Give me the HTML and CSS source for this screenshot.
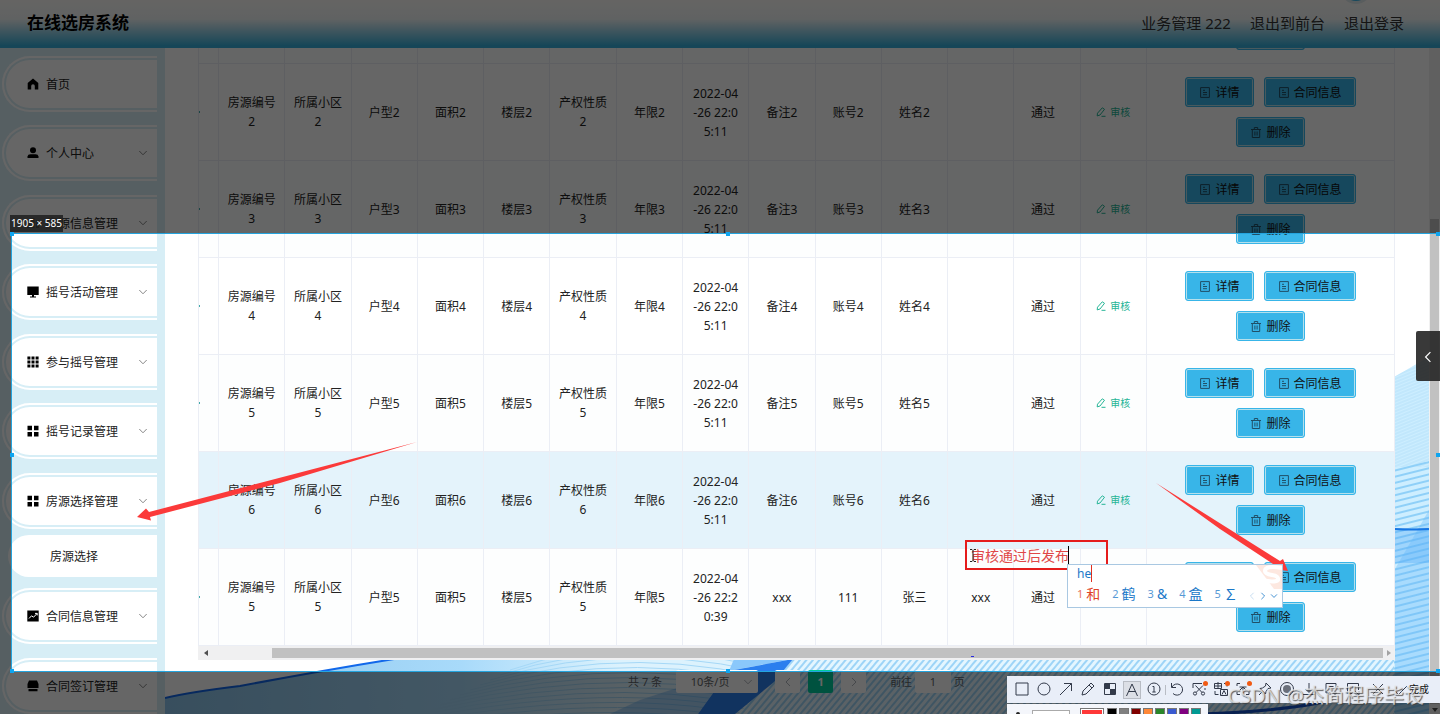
FILE: index.html
```html
<!DOCTYPE html>
<html lang="zh-CN">

<head>
    <meta charset="UTF-8">
    <meta name="viewport" content="width=device-width, initial-scale=1.0">
    <title>在线选房系统</title>
    <link rel="stylesheet" href="styles.css">
</head>

<body>
    <!-- 图标 -->
    <svg class="symbols" aria-hidden="true">
        <symbol id="i-home" viewBox="0 0 12 12"><path d="M6 .5 11.3 5v6.5H7.8V8a1.8 1.8 0 0 0-3.6 0v3.5H.7V5z" /></symbol>
        <symbol id="i-user" viewBox="0 0 12 12"><circle cx="6" cy="3.2" r="3" /><path d="M.5 11V9.500Q.800 7.200 3.500 7.200H8.500Q11.200 7.200 11.500 9.500V11z" /></symbol>
        <symbol id="i-bars" viewBox="0 0 12 12"><path d="M0 5h3v6H0zM4.500 1h3v10h-3zM9 3h3v8H9z" /></symbol>
        <symbol id="i-screen" viewBox="0 0 12 12"><path d="M.3.500h11.400v8.500H.3zM5 9h2v1.500h2v1H3v-1h2z" /></symbol>
        <symbol id="i-grid9" viewBox="0 0 12 12"><path d="M.4.400h3v3h-3zM4.500.400h3v3h-3zM8.600.400h3v3h-3zM.4 4.500h3v3h-3zM4.500 4.500h3v3h-3zM8.600 4.500h3v3h-3zM.4 8.600h3v3h-3zM4.500 8.600h3v3h-3zM8.600 8.600h3v3h-3z" /></symbol>
        <symbol id="i-grid4" viewBox="0 0 12 12"><path d="M.5.800h4.500v4.400H.500zM7 .8h4.500v4.400H7zM.5 7h4.500v4.400H.500zM7 7h4.500v4.400H7z" /></symbol>
        <symbol id="i-chart" viewBox="0 0 12 12"><path d="M.3.500h11.400v11H.3z" /><path d="m2 8.500 2.500-2.700 2 1.400L10 3.600M8 3.400h2.200v2" fill="none" stroke="#fff" /></symbol>
        <symbol id="i-print" viewBox="0 0 12 12"><path d="M2 .5h8L11.500 4v4H.5V4zM1.500 9h9v2.300h-9z" /></symbol>
        <symbol id="i-down" viewBox="0 0 10 10"><path d="m1.300 3 3.700 3.800L8.700 3" fill="none" stroke="currentColor" /></symbol>
        <symbol id="i-left" viewBox="0 0 10 10"><path d="M7 1 3 5l4 4" fill="none" stroke="currentColor" /></symbol>
        <symbol id="i-right" viewBox="0 0 10 10"><path d="m3 1 4 4-4 4" fill="none" stroke="currentColor" /></symbol>
        <symbol id="i-doc" viewBox="0 0 10 11"><path d="M.6.600h8.800v9.800H.600zM3 3.300h2M3 5.500h4M3 7.700h4" fill="none" stroke="currentColor" /></symbol>
        <symbol id="i-trash" viewBox="0 0 10 11"><path d="M0 2.500h10M3.300 2.500v-2h3.400v2M1.300 2.500v8h7.400v-8M3.900 4.500v4M6.100 4.500v4" fill="none" stroke="currentColor" /></symbol>
        <symbol id="i-edit" viewBox="0 0 10 10"><path d="M6.300.800 8.500 2.300 4 8 1.200 8.900 1.500 6.200zM5.500 9.300h4" fill="none" stroke="currentColor" /></symbol>
    </svg>

    <header class="header">
        <h1>在线选房系统</h1>
        <nav>
            <span>业务管理 222</span>
            <a href="#">退出到前台</a>
            <a href="#">退出登录</a>
        </nav>
        <i class="avatar"></i>
    </header>

    <div class="body">
        <aside class="sidebar">
            <ul class="menu" id="j_menu"></ul>
        </aside>

        <main class="main">
            <svg class="backdrop" viewBox="165 48 1264 666" preserveAspectRatio="none" aria-hidden="true">
                <defs>
                    <pattern id="p-fine" width="6" height="3" patternUnits="userSpaceOnUse" patternTransform="rotate(-22)">
                        <path d="M0 1h6" stroke="#b5e0f9" />
                    </pattern>
                    <pattern id="p-wide" width="6" height="6" patternUnits="userSpaceOnUse" patternTransform="rotate(-14)">
                        <path d="M0 2h6" stroke="#8fd0f8" stroke-width="2" />
                    </pattern>
                    <pattern id="p-hatch" width="5" height="5" patternUnits="userSpaceOnUse" patternTransform="rotate(-50)">
                        <path d="M0 2h5" stroke="#9dd4f7" stroke-width="2" />
                    </pattern>
                    <linearGradient id="g-wave" gradientUnits="userSpaceOnUse" x1="165" y1="0" x2="620" y2="0">
                        <stop offset="0" stop-color="#8cc4ea" />
                        <stop offset=".65" stop-color="#a8dafa" />
                        <stop offset="1" stop-color="#dcf2fd" />
                    </linearGradient>
                </defs>
                <path d="M165 698Q190 692 240 686 320 671 394 659H1429V714H165z" fill="url(#g-wave)" />
                <path d="M165 698Q190 692 240 686 320 671 394 659" fill="none" stroke="#1268ea" stroke-width="2" />
                <g id="j_waves" fill="none" stroke="#a5d8f7"></g>
                <path d="M793 659H1429V714H738z" fill="#e4f6ff" />
                <path d="M793 659H1429V714H738z" fill="url(#p-hatch)" />
                <path d="M734 659h58l-63 12z" fill="#8ac8fb" />
                <path d="M729 671 793 659 774 682 735 714H698z" fill="#2b7fee" />
                <path d="M640 700 729 671 698 714H610z" fill="#5ba5ea" opacity=".4" />
                <path d="M1394 377l35-20v357h-35z" fill="#cdeeff" />
                <path d="M1394 377l35-20v110h-35z" fill="url(#p-fine)" />
                <path d="M1394 468l35-7v253h-35z" fill="url(#p-wide)" />
                <path d="M1394 529h35v34h-35z" fill="#4ba6f5" opacity=".35" />
                <path d="M1429 510v204h-34v-145z" fill="#65b8f8" opacity=".35" />
                <path d="M1394 529q18 1 35 0" fill="none" stroke="#1676e4" stroke-width="2" />
                <path d="M1200 714q100-3 150-19" fill="none" stroke="#1550c8" stroke-width="3" />
            </svg>

            <div class="content">
                <table class="table">
                    <colgroup>
                        <col class="col-first">
                        <col span="14">
                        <col class="col-last">
                    </colgroup>
                    <tbody id="j_tb"></tbody>
                </table>
                <div class="scroll-x"><i class="tri-left"></i><i class="thumb"></i><i class="tri-right"></i></div>
                <div class="pager">
                    <span>共 7 条</span>
                    <label class="size">
                        <select aria-label="每页条数">
                            <option>10条/页</option>
                        </select>
                        <svg><use href="#i-down" /></svg>
                    </label>
                    <div class="pages">
                        <button aria-label="上一页"><svg><use href="#i-left" /></svg></button>
                        <button class="on">1</button>
                        <button aria-label="下一页"><svg><use href="#i-right" /></svg></button>
                    </div>
                    <label class="jump">前往 <input type="text" value="1"> 页</label>
                </div>
            </div>
        </main>
        <div class="scroll-y"><i class="thumb"></i><i class="tri-down"></i></div>
    </div>

    <!-- 截图选区 -->
    <div class="shade">
        <div class="region">
            <span class="dims">1905 × 585</span>
            <i class="dot t l"></i><i class="dot t c"></i><i class="dot t r"></i>
            <i class="dot m l"></i><i class="dot m r"></i>
            <i class="dot b l"></i><i class="dot b c"></i><i class="dot b r"></i>
        </div>
    </div>

    <button class="drawer" aria-label="展开"><svg><use href="#i-left" /></svg></button>

    <!-- 标注 -->
    <svg class="arrows" width="1440" height="714" aria-hidden="true">
        <path d="M417 442 149 512 146 508.500 137 517 151 520.500 150 517 280 483z" fill="#fb3a3a" />
        <path d="M1156 483 1280 561 1283 559 1288 571 1274 569 1276 566 1220 529z" fill="#fb3a3a" />
        <path d="M971 656.500h3" stroke="#2a2ae0" />
    </svg>
    <div class="note">
        <input type="text" value="审核通过后发布" aria-label="标注文字">
        <i class="caret"></i>
        <svg class="beam" viewBox="0 0 6 13"><path d="M0 .5h2l1 1 1-1h2M0 12.500h2l1-1 1 1h2M3 1.500v10" fill="none" stroke="#222" /></svg>
    </div>
    <div class="ime">
        <svg class="logo" viewBox="0 0 26 24"><path d="M0 0h26v24h-8z" fill="#fde8e0" /><path d="M26 3Q9 0 9 6q0 3 7 4t6 5Q19 18 6 15" fill="none" stroke="#fff" stroke-width="4" /></svg>
        <p class="typed">he</p>
        <ol>
            <li class="first"><small>1</small>和</li>
            <li><small>2</small>鹤</li>
            <li><small>3</small>&amp;</li>
            <li><small>4</small>盒</li>
            <li><small>5</small>∑</li>
        </ol>
        <div class="turn">
            <svg class="off"><use href="#i-left" /></svg>
            <svg><use href="#i-right" /></svg>
            <svg><use href="#i-down" /></svg>
        </div>
    </div>

    <!-- 截图工具条 -->
    <div class="tools">
        <div class="bar">
            <button aria-label="矩形"><svg viewBox="0 0 16 16"><path d="M2 2h12v12H2z" /></svg></button>
            <button aria-label="椭圆"><svg viewBox="0 0 16 16"><circle cx="8" cy="8" r="6" /></svg></button>
            <button aria-label="箭头"><svg viewBox="0 0 16 16"><path d="M2 14 13.500 2.500M6 2.500h7.500V10" /></svg></button>
            <button aria-label="画笔"><svg viewBox="0 0 16 16"><path d="m2 14 1-4 8-8 3 3-8 8zM9 4l3 3" /></svg></button>
            <button aria-label="马赛克"><svg viewBox="0 0 16 16"><path d="M2.500 2.500h11v11h-11z" /><path d="M3 3h5v5H3zM8 8h5v5H8z" fill="#333a4a" stroke="none" /></svg></button>
            <button class="on" aria-label="文字"><svg viewBox="0 0 16 16"><path d="M2.500 14 8 2l5.500 12M4.500 9.500h7" /></svg></button>
            <button aria-label="序号"><svg viewBox="0 0 16 16"><circle cx="8" cy="8" r="6" /><path d="M6.500 5.500H8V11M6.300 11h3.400" /></svg></button>
            <i class="sep"></i>
            <button aria-label="撤销"><svg viewBox="0 0 16 16"><path d="M2.500 2v4.500H7M3 6a5.600 5.600 0 1 1 1 6.500" /></svg></button>
            <button class="new" aria-label="剪裁"><svg viewBox="0 0 16 16"><path d="M2 7V2.500h9M4.500 4.500l6.500 7M12 4.500l-7 7M14 7v2" /><circle cx="4" cy="12.500" r="1.600" /><circle cx="12" cy="12.500" r="1.600" /></svg></button>
            <button class="new" aria-label="翻译"><svg viewBox="0 0 16 16"><path d="M1.500 2.500h7v5h-7zM1.500 5h7M5 1v6.500M7.500 8.500h7v6h-7zM9 13.500l2-4 2 4M2 10v3.500h3.500M11 2.500h3v3" /></svg></button>
            <button class="new" aria-label="识别文字"><svg viewBox="0 0 16 16"><path d="M2 5V2.500h3M14 11v2.500h-3M2 11v2.500h3M4.500 6h7M8 6v6M5 9l3-3 3 3" /></svg></button>
            <button aria-label="钉住"><svg viewBox="0 0 16 16"><path d="m9 2 5 5-3 .500-2 3-.5 2.500-5.500-5.500 2.500-.500 3-2zM6 10l-4 4" /></svg></button>
            <button aria-label="录制"><svg viewBox="0 0 16 16"><circle cx="8" cy="8" r="6.500" /><circle cx="8" cy="8" r="4" fill="#6a6f7a" stroke="none" /></svg></button>
            <button aria-label="下载"><svg viewBox="0 0 16 16"><path d="M8 2v9M4.500 8 8 11.500 11.500 8M2 13.500h12" /></svg></button>
            <button aria-label="收藏"><svg viewBox="0 0 16 16"><path d="M13 8V2.500H3V12h4M5.500 5.500h5M12 10v4M10 12h4" /></svg></button>
            <button aria-label="发送"><svg viewBox="0 0 16 16"><path d="M13.500 9V2.500h-11v10H7M5 6h6M10 10l4 4M14 10.500V14h-3.500" /></svg></button>
            <button class="gap" aria-label="取消"><svg viewBox="0 0 16 16"><path d="m3 3 10 10M13 3 3 13" /></svg></button>
            <button class="done"><svg viewBox="0 0 16 16"><path d="m2 9 3.500 3.500L14 4" /></svg>完成</button>
        </div>
        <div class="palette">
            <i class="size-dot"></i>
            <input type="text" aria-label="字号">
            <button class="c-red current" aria-label="当前颜色"></button>
            <button class="c-black" aria-label="黑"></button>
            <button class="c-gray" aria-label="灰"></button>
            <button class="c-maroon" aria-label="深红"></button>
            <button class="c-orange" aria-label="橙"></button>
            <button class="c-green" aria-label="绿"></button>
            <button class="c-blue" aria-label="蓝"></button>
            <button class="c-purple" aria-label="紫"></button>
            <button class="c-teal" aria-label="青"></button>
        </div>
    </div>
    <div class="watermark">CSDN @杰简程序毕设</div>

    <script>
        function $(id) {
            return document.getElementById(id);
        }
        function icon(name) {
            return '<svg><use href="#i-' + name + '"/></svg>';
        }

        //左侧菜单
        var menus = [
            ["home", "首页"],
            ["user", "个人中心"],
            ["bars", "房源信息管理"],
            ["screen", "摇号活动管理"],
            ["grid9", "参与摇号管理"],
            ["grid4", "摇号记录管理"],
            ["grid4", "房源选择管理", "房源选择"],
            ["chart", "合同信息管理"],
            ["print", "合同签订管理"]
        ];
        var html = "";
        for (var i = 0; i < menus.length; i++) {
            var m = menus[i];
            html += '<li><a class="item" href="#">' + icon(m[0]) + '<span>' + m[1] + '</span>' + (i > 0 ? icon("down") : "") + '</a>';
            if (m[2]) {
                html += '<a class="sub" href="#">' + m[2] + '</a>';
            }
            html += '</li>';
        }
        $("j_menu").innerHTML = html;

        //表格数据：序号、时间、备注、账号、姓名、审核回复
        var rows = [
            [1, "2022-04<br>-26 22:0<br>5:11", "备注1", "账号1", "姓名1", ""],
            [2, "2022-04<br>-26 22:0<br>5:11", "备注2", "账号2", "姓名2", ""],
            [3, "2022-04<br>-26 22:0<br>5:11", "备注3", "账号3", "姓名3", ""],
            [4, "2022-04<br>-26 22:0<br>5:11", "备注4", "账号4", "姓名4", ""],
            [5, "2022-04<br>-26 22:0<br>5:11", "备注5", "账号5", "姓名5", ""],
            [6, "2022-04<br>-26 22:0<br>5:11", "备注6", "账号6", "姓名6", ""],
            [5, "2022-04<br>-26 22:2<br>0:39", "xxx", "111", "张三", "xxx"]
        ];
        html = "";
        for (var i = 0; i < rows.length; i++) {
            var r = rows[i], n = r[0];
            var cells = ["房源编号<br>" + n, "所属小区<br>" + n, "户型" + n, "面积" + n, "楼层" + n, "产权性质<br>" + n, "年限" + n, r[1], r[2], r[3], r[4], r[5]];
            html += '<tr' + (i === 5 ? ' class="hover"' : '') + '><td class="cut"><i></i></td><td>' + cells.join("</td><td>") + '</td>';
            html += '<td class="state">通过</td><td><button class="link">' + icon("edit") + '审核</button></td>';
            html += '<td><div class="ops"><button>' + icon("doc") + '详情</button><button>' + icon("doc") + '合同信息</button><button>' + icon("trash") + '删除</button></div></td></tr>';
        }
        $("j_tb").innerHTML = html;

        //背景波纹
        html = "";
        for (var i = 0; i < 18; i++) {
            var y = 650 + i * 5;
            html += '<path d="M' + (510 - i * 10) + ' ' + (y + 20) + 'Q640 ' + (y - 26) + ' 800 ' + (y + 22) + '"/>';
        }
        $("j_waves").innerHTML = html;
    </script>
</body>

</html>
```
FILE: styles.css
```css
* {
    box-sizing: border-box;
    margin: 0;
    padding: 0;
}

body {
    display: flex;
    flex-direction: column;
    position: relative;
    height: 100vh;
    overflow: hidden;
    background: #fff;
    color: #222;
    font: 12px/19px "Noto Sans", "Noto Sans CJK SC", sans-serif;
}

a {
    color: inherit;
    text-decoration: none;
}

button,
input,
select {
    border: 0;
    background: none;
    color: inherit;
    font: inherit;
}

ul,
ol {
    list-style: none;
}

.symbols {
    display: none;
}

/* 头部 */
.header {
    display: flex;
    flex: none;
    align-items: center;
    justify-content: space-between;
    position: relative;
    height: 48px;
    padding: 0 36px 2px 27px;
    overflow: hidden;
    background: linear-gradient(#fdfbf8 0%, #f0f5f6 40%, #38b0dc 95%);
}

.header h1 {
    color: #000;
    font-size: 17px;
    line-height: 24px;
}

.header nav {
    display: flex;
    gap: 19px;
    color: #333;
    font-size: 15px;
}

.avatar {
    position: absolute;
    top: -28px;
    right: 68px;
    width: 32px;
    height: 32px;
    border: 3px solid #dfe8ec;
    border-radius: 50%;
    background: #38b5e8;
}

.body {
    display: flex;
    flex: 1;
    min-height: 0;
}

/* 菜单 */
.sidebar {
    flex: none;
    width: 165px;
    padding: 8px 8px 0 2px;
    overflow: hidden;
    background: #d7eef6;
}

.menu li {
    margin-bottom: 14px;
    overflow: hidden;
}

.menu li:nth-child(odd) {
    margin-bottom: 13px;
}

.menu li:nth-child(7) {
    margin-bottom: 11px;
}

.item {
    display: flex;
    align-items: center;
    height: 56px;
    margin-right: -5px;
    padding: 0 14px 0 25px;
    border-radius: 28px 0 0 28px;
    background: #fff;
    box-shadow: inset 0 0 0 2px #fff, inset 0 0 0 4px #d7eef6;
}

.item svg {
    flex: none;
    width: 12px;
    height: 12px;
    fill: #000;
}

.item span {
    flex: 1;
    margin-left: 7px;
}

.item svg:last-child:not(:first-child) {
    width: 10px;
    height: 10px;
    color: #888;
}

.sub {
    display: flex;
    align-items: center;
    height: 42px;
    margin: 6px 0 0 6px;
    padding-left: 42px;
    border-radius: 21px 0 0 21px;
    background: #fff;
}

/* 内容 */
.main {
    flex: 1;
    position: relative;
    min-width: 0;
    overflow: hidden;
}

.backdrop {
    position: absolute;
    width: 100%;
    height: 100%;
}

.content {
    position: relative;
    padding: 0 34px 0 33px;
}

.table {
    width: 100%;
    margin-top: -82px;
    border-collapse: collapse;
    table-layout: fixed;
    background: #fff;
}

.col-first {
    width: 20px;
}

.col-last {
    width: 248px;
}

.table tr {
    height: 97px;
}

.table tr:nth-child(odd) {
    background: #fdfefe;
}

.table tr.hover {
    background: #e4f3fb;
}

.table td {
    border: 1px solid #ebeef5;
    text-align: center;
}

.table td.cut {
    text-align: left;
}

.table td.state {
    padding-right: 8px;
}

.cut i {
    display: block;
    width: 1px;
    height: 2px;
    background: #4aa;
}

.link {
    color: #25b596;
    font-size: 10px;
    white-space: nowrap;
}

.link svg {
    width: 10px;
    height: 10px;
    margin-right: 4px;
    vertical-align: -1px;
}

.ops {
    display: flex;
    flex-wrap: wrap;
    justify-content: center;
    gap: 10px;
}

.ops button {
    display: flex;
    align-items: center;
    gap: 5px;
    height: 30px;
    padding: 0 13px 0 14px;
    border: 1px solid #38b5e8;
    border-radius: 3px;
    background: #38b5e8;
    box-shadow: inset 0 0 0 1px #b4e0ec;
    color: #111;
}

.ops svg {
    width: 10px;
    height: 11px;
    color: #205068;
}

.scroll-x {
    display: flex;
    align-items: center;
    height: 14px;
    padding: 0 4px 0 6px;
    background: #f0f0f1;
}

.scroll-x .thumb {
    flex: 1;
    height: 10px;
    margin: 0 4px 0 64px;
    background: #c1c1c1;
}

.tri-left,
.tri-right {
    border: 3px solid transparent;
    border-width: 3px 4px 3px 0;
    border-right-color: #505050;
}

.tri-right {
    border-width: 3px 0 3px 4px;
    border-left-color: #a3a3a3;
}

.scroll-y {
    display: flex;
    flex: none;
    flex-direction: column;
    align-items: center;
    width: 11px;
    padding: 171px 1px 2px;
    background: #f1f1f1;
}

.scroll-y .thumb {
    flex: 1;
    width: 9px;
    margin-bottom: 4px;
    background: #c1c1c1;
}

.tri-down {
    border: 3px solid transparent;
    border-width: 4px 3px 0;
    border-top-color: #505050;
}

/* 分页 */
.pager {
    display: flex;
    align-items: center;
    justify-content: center;
    margin-top: 10px;
    color: #606266;
    font-size: 11px;
}

.size {
    position: relative;
    margin: 0 17px 0 14px;
}

.size select {
    width: 82px;
    height: 23px;
    padding-right: 14px;
    border-radius: 2px;
    appearance: none;
    background: #fff;
    text-align: center;
}

.size svg {
    position: absolute;
    top: 7px;
    right: 5px;
    width: 10px;
    height: 10px;
    color: #b0b4bc;
}

.pages {
    display: flex;
    gap: 8px;
}

.pages button {
    width: 25px;
    height: 23px;
    border-radius: 2px;
    background: #fff;
    color: #b0b4bc;
}

.pages svg {
    width: 10px;
    height: 10px;
    vertical-align: -1px;
}

.pages .on {
    background: #00cc9d;
    color: #fff;
    font-weight: bold;
}

.jump {
    margin-left: 24px;
}

.jump input {
    width: 36px;
    height: 23px;
    border-radius: 2px;
    background: #fff;
    text-align: center;
}

/* 截图选区 */
.shade {
    position: absolute;
    inset: 0;
    overflow: hidden;
    pointer-events: none;
}

.region {
    position: absolute;
    inset: 233px 0 42px 11px;
    border: 1px solid #24a4de;
    border-width: 1px 0 1px 1px;
    box-shadow: 0 0 0 2000px rgba(0, 0, 0, .6);
}

.dims {
    position: absolute;
    top: -19px;
    left: -2px;
    padding: 0 1px;
    background: rgba(34, 34, 34, .9);
    color: #fff;
    font-size: 10px;
    line-height: 17px;
    white-space: nowrap;
}

.dot {
    position: absolute;
    width: 4px;
    height: 4px;
    background: #0ea5f0;
}

.dot.t {
    top: -2px;
}

.dot.m {
    top: 50%;
}

.dot.b {
    bottom: -2px;
}

.dot.l {
    left: -2px;
}

.dot.c {
    left: 50%;
}

.dot.r {
    right: 0;
}

.drawer {
    position: absolute;
    top: 331px;
    right: 0;
    width: 24px;
    height: 50px;
    border-radius: 2px 0 0 2px;
    background: rgba(40, 40, 40, .92);
    color: #fff;
}

.drawer svg {
    width: 12px;
    height: 12px;
    vertical-align: middle;
}

/* 标注 */
.arrows {
    position: absolute;
    top: 0;
    left: 0;
    pointer-events: none;
}

.note {
    position: absolute;
    top: 540px;
    left: 965px;
    width: 143px;
    height: 30px;
    border: 2px solid #e51c1c;
}

.note input {
    width: 100%;
    height: 100%;
    padding-left: 4px;
    color: #e04848;
    font-size: 14px;
}

.caret {
    position: absolute;
    top: 4px;
    left: 101px;
    width: 1px;
    height: 18px;
    background: #000;
}

.beam {
    position: absolute;
    top: 7px;
    left: 3px;
    width: 6px;
    height: 13px;
}

.ime {
    position: absolute;
    top: 564px;
    left: 1067px;
    width: 216px;
    height: 44px;
    padding: 0 9px;
    border: 1px solid #a9c8e2;
    background: #fff;
    color: #1b78c8;
}

.ime .logo {
    position: absolute;
    top: 0;
    right: 0;
    width: 26px;
    height: 24px;
}

.typed {
    width: 15px;
    border-right: 1px solid #e03020;
    line-height: 17px;
}

.ime ol {
    display: flex;
    gap: 12px;
    font-size: 14px;
    line-height: 24px;
}

.ime li {
    display: flex;
    gap: 3px;
}

.ime small {
    font-size: 11px;
    opacity: .75;
}

.ime .first {
    color: #e04428;
}

.turn {
    display: flex;
    gap: 3px;
    position: absolute;
    right: 4px;
    bottom: 7px;
}

.turn svg {
    width: 8px;
    height: 8px;
}

.turn .off {
    opacity: .3;
}

/* 工具条 */
.tools {
    position: absolute;
    top: 676px;
    right: 0;
    width: 433px;
}

.bar {
    display: flex;
    align-items: center;
    height: 27px;
    padding-left: 4px;
    background: #e9eef8;
    color: #111;
    font-size: 10px;
}

.bar button {
    flex: none;
    position: relative;
    width: 22px;
    height: 18px;
}

.bar svg {
    width: 16px;
    height: 16px;
    fill: none;
    stroke: #333a4a;
    vertical-align: top;
}

.bar .on {
    width: 18px;
    margin: 0 2px;
    border: 1px solid #b8bcc4;
    background: #dcdfe6;
}

.bar .new::after {
    content: "";
    position: absolute;
    top: 0;
    right: 2px;
    width: 5px;
    height: 5px;
    border-radius: 50%;
    background: #f05a14;
}

.sep {
    width: 1px;
    height: 10px;
    background: #b8bcc4;
}

.bar .gap {
    margin-left: 3px;
}

.bar .done {
    display: flex;
    align-items: center;
    width: auto;
    margin-left: 4px;
}

.palette {
    display: flex;
    gap: 2px;
    width: 201px;
    height: 10px;
    margin-top: 1px;
    padding: 4px 0 0 9px;
    overflow: hidden;
    background: #f4f6fb;
}

.palette button {
    flex: none;
    width: 10px;
    height: 12px;
    border: 1px solid #777;
}

.palette .current {
    width: 24px;
    margin: 0 1px 0 8px;
    box-shadow: inset 0 0 0 1px #fff;
}

.palette input {
    width: 38px;
    height: 12px;
    margin-top: 2px;
    margin-left: 10px;
    border: 1px solid #aaa;
    background: #fff;
}

.size-dot {
    width: 4px;
    height: 4px;
    margin-top: 4px;
    border-radius: 50%;
    background: #222;
}

.c-red {
    background: #ff3838;
}

.c-black {
    background: #000;
}

.c-gray {
    background: #808080;
}

.c-maroon {
    background: #800000;
}

.c-orange {
    background: #ff8837;
}

.c-green {
    background: #2a862a;
}

.c-blue {
    background: #3a5ad0;
}

.c-purple {
    background: #800080;
}

.c-teal {
    background: #009a93;
}

.watermark {
    position: absolute;
    right: 16px;
    bottom: 4px;
    color: rgba(235, 235, 235, .75);
    font-size: 20px;
    line-height: 28px;
    text-shadow: 1px 1px 1px rgba(60, 60, 60, .8);
    white-space: nowrap;
    pointer-events: none;
}
```
